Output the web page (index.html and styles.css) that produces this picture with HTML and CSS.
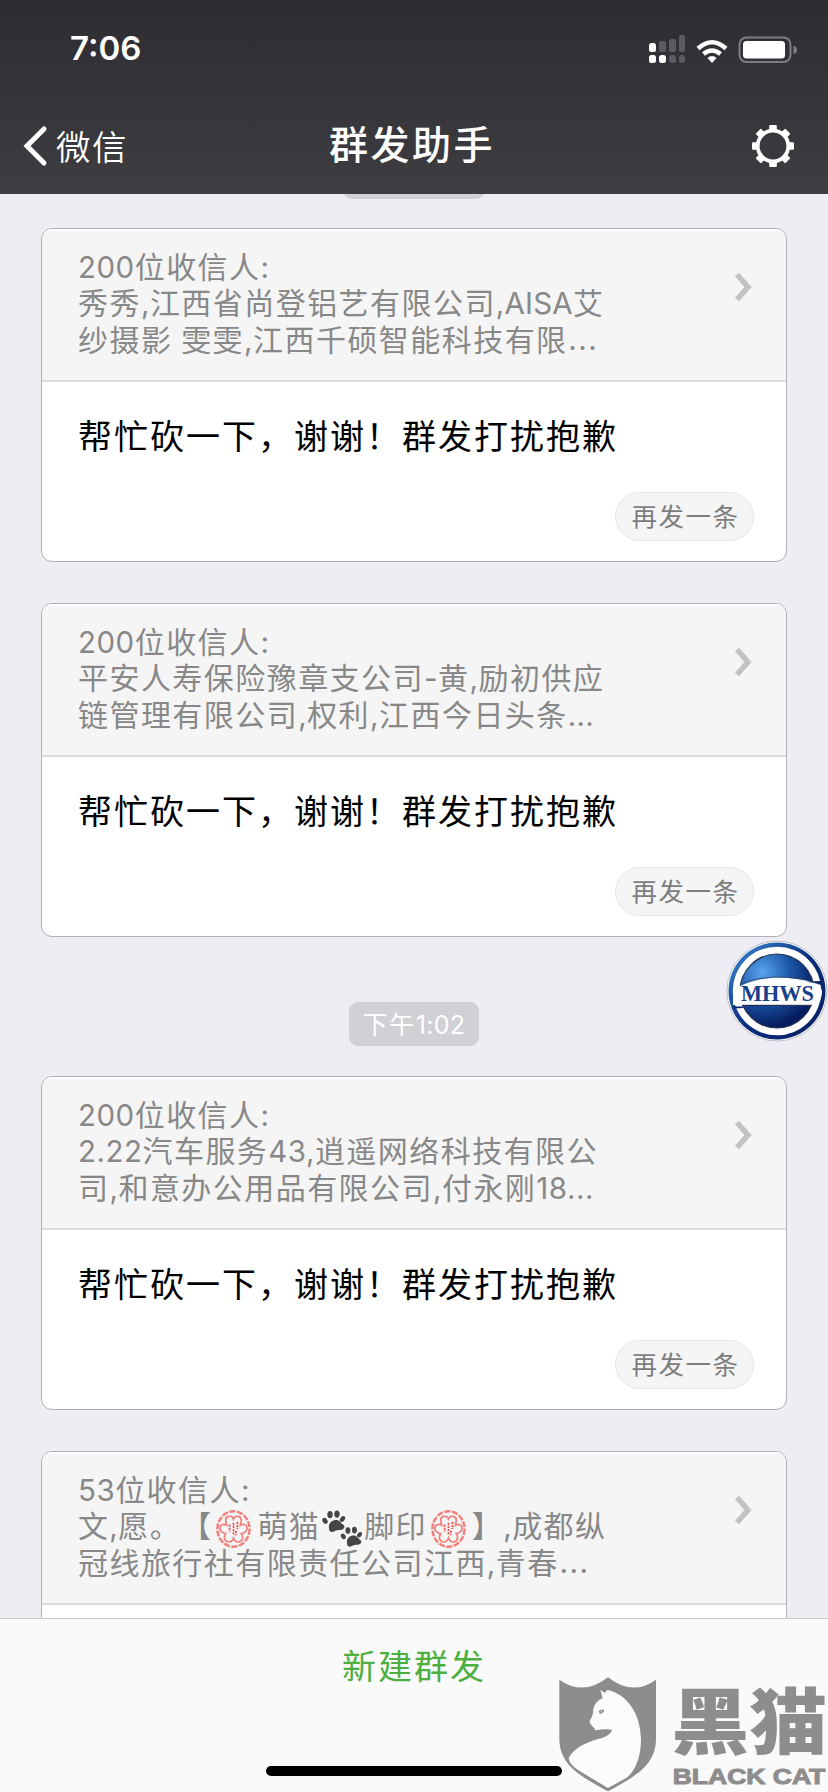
FILE: index.html
```html
<!DOCTYPE html>
<html lang="zh-CN">
<head>
<meta charset="utf-8">
<title>群发助手</title>
<link rel="stylesheet" href="styles.css">
</head>
<body>
<svg width="0" height="0" class="defs">
  <symbol id="chevron" viewBox="0 0 18 30"><path d="M3 2.500L14 15L3 27.500" fill="none" stroke="#c2c2c2" stroke-width="5.500"/></symbol>
  <symbol id="flower" viewBox="0 0 38 44" preserveAspectRatio="none">
    <g fill="none" stroke="#f0817c">
      <ellipse cx="19" cy="22" rx="16.500" ry="19.500" stroke-width="2.600" stroke-dasharray="6.500 1.500"/>
      <path d="M19 11c2-5 8-3 8 1c0 3-1 4-1 6c3-2 7-1 7 3s-4 6-6 6c2 3 2 8-2 9c-3 1-5-1-6-4c-1 3-3 5-6 4c-4-1-4-6-2-9c-2 0-6-2-6-6s4-5 7-3c0-2-1-3-1-6c0-4 6-6 8-1z" stroke-width="1.800"/>
    </g>
    <path d="M23 14v8M19 15v13M15 17v8M21.500 24v5" stroke="#ef5350" stroke-width="1.800" stroke-dasharray="2.500 1"/>
  </symbol>
  <symbol id="paws" viewBox="0 0 40 42" preserveAspectRatio="none">
    <g fill="#454545">
      <g id="paw"><path d="M7 20c-1-5 3-9 7-9s4 3 7 5s1 6-3 6s-4 1-7 2s-4-1-4-4z"/><ellipse cx="3" cy="12" rx="2.500" ry="3.500" transform="rotate(-25 3 12)"/><ellipse cx="8" cy="5" rx="2.700" ry="4"/><ellipse cx="15" cy="4.500" rx="2.700" ry="4"/><ellipse cx="20.500" cy="10" rx="2.300" ry="3.500" transform="rotate(30 20.500 10)"/></g>
      <use href="#paw" transform="translate(18.500 18) scale(.93)"/>
    </g>
  </symbol>
</svg>
<div class="screen">
  <header class="top">
    <div class="status">
      <div class="time">7:06</div>
      <svg class="indicators" width="150" height="32" viewBox="0 0 150 32">
        <g fill="#fff"><rect x="1" y="9" width="7" height="9" rx="2.500"/><rect x="1" y="21" width="7" height="8" rx="2.500"/><rect x="11" y="21" width="7" height="8" rx="2.500"/></g>
        <g fill="#5c5b60"><rect x="11" y="7" width="7" height="11" rx="2"/><rect x="21" y="5" width="7" height="13" rx="2"/><rect x="31" y="1" width="6" height="17" rx="2"/><rect x="21" y="21" width="7" height="8" rx="2.500"/><rect x="31" y="21" width="6" height="8" rx="2.500"/></g>
        <g fill="none" stroke="#fff" stroke-width="4.400"><path d="M50 14.500Q64 2 78 14.500"/><path d="M55.500 20Q64 13 72.500 20"/></g>
        <path d="M59.500 24Q64 20 68.500 24L64 29z" fill="#fff"/>
        <rect x="91.500" y="3.500" width="51" height="24.500" rx="7" fill="none" stroke="#7d7c80" stroke-width="2"/>
        <rect x="95" y="7" width="42" height="17.500" rx="3.500" fill="#fff"/>
        <path d="M145.500 11.500Q149 12.500 149 16T145.500 20z" fill="#7d7c80"/>
      </svg>
    </div>
    <nav class="nav">
      <div class="back">
        <svg width="26" height="42" viewBox="0 0 26 42"><path d="M21 4L4 21L21 38" fill="none" stroke="#fff" stroke-width="5" stroke-linecap="round"/></svg>
        <span>微信</span>
      </div>
      <h1>群发助手</h1>
      <svg class="gear" width="44" height="44" viewBox="-22 -22 44 44">
        <circle r="15.300" fill="none" stroke="#fff" stroke-width="3.800"/>
        <g fill="#fff"><g id="teeth"><rect x="-3.800" y="-21" width="7.600" height="6" rx="1"/><rect x="-3.800" y="15" width="7.600" height="6" rx="1"/><rect x="-21" y="-3.800" width="6" height="7.600" rx="1"/><rect x="15" y="-3.800" width="6" height="7.600" rx="1"/></g><use href="#teeth" transform="rotate(45)"/></g>
      </svg>
    </nav>
  </header>
  <main class="feed">
    <div class="pill cut"></div>
    <section class="card">
      <div class="recipients">
        <p><span class="lat">200</span>位收信人<span class="lat">:</span></p>
        <p>秀秀<span class="lat">,</span>江西省尚登铝艺有限公司<span class="lat tight">,AISA</span>艾</p>
        <p>纱摄影<span class="lat sp"> </span>雯雯<span class="lat">,</span>江西千硕智能科技有限<span class="dots">…</span></p>
        <svg class="arrow"><use href="#chevron"/></svg>
      </div>
      <p class="message">帮忙砍一下，谢谢！群发打扰抱歉</p>
      <button class="again">再发一条</button>
    </section>
    <section class="card">
      <div class="recipients">
        <p><span class="lat">200</span>位收信人<span class="lat">:</span></p>
        <p>平安人寿保险豫章支公司<span class="lat">-</span>黄<span class="lat">,</span>励初供应</p>
        <p>链管理有限公司<span class="lat">,</span>权利<span class="lat">,</span>江西今日头条<span class="lat tight">...</span></p>
        <svg class="arrow"><use href="#chevron"/></svg>
      </div>
      <p class="message">帮忙砍一下，谢谢！群发打扰抱歉</p>
      <button class="again">再发一条</button>
    </section>
    <div class="pill">下午<span>1:02</span></div>
    <section class="card">
      <div class="recipients">
        <p><span class="lat">200</span>位收信人<span class="lat">:</span></p>
        <p><span class="lat">2.22</span>汽车服务<span class="lat">43,</span>逍遥网络科技有限公</p>
        <p>司<span class="lat">,</span>和意办公用品有限公司<span class="lat">,</span>付永刚<span class="lat">18...</span></p>
        <svg class="arrow"><use href="#chevron"/></svg>
      </div>
      <p class="message">帮忙砍一下，谢谢！群发打扰抱歉</p>
      <button class="again">再发一条</button>
    </section>
    <section class="card">
      <div class="recipients">
        <p><span class="lat">53</span>位收信人<span class="lat">:</span></p>
        <p class="full">文<span class="lat">,</span>愿。【<svg class="emoji"><use href="#flower"/></svg>萌猫<svg class="emoji paws"><use href="#paws"/></svg>脚印<svg class="emoji"><use href="#flower"/></svg>】<span class="lat">,</span>成都纵</p>
        <p>冠线旅行社有限责任公司江西<span class="lat">,</span>青春<span class="dots">…</span></p>
        <svg class="arrow"><use href="#chevron"/></svg>
      </div>
      <p class="message"></p>
    </section>
  </main>
  <footer class="bottom">
    <a class="create">新建群发</a>
    <div class="home"></div>
  </footer>
  <svg class="badge" viewBox="0 0 102 102">
    <defs>
      <radialGradient id="blue" cx=".3" cy=".25" r=".75"><stop offset="0" stop-color="#5aa5ee"/><stop offset=".5" stop-color="#1c57a8"/><stop offset="1" stop-color="#061c5e"/></radialGradient>
      <linearGradient id="rim" x1="0" y1="0" x2="1" y2="1"><stop offset="0" stop-color="#3f8edb"/><stop offset=".5" stop-color="#0b2f7d"/><stop offset="1" stop-color="#08205e"/></linearGradient>
    </defs>
    <circle cx="51" cy="51" r="50" fill="#fff" stroke="#a9adb8" stroke-width=".8"/>
    <circle cx="51" cy="51" r="48.500" fill="url(#rim)"/>
    <circle cx="51" cy="51" r="44.300" fill="#fff"/>
    <circle cx="51" cy="51" r="37" fill="url(#blue)" stroke="#273452" stroke-width="1.200"/>
    <path d="M7 50Q25 39 50 37.500Q75 38 90 43Q96 46 96 53Q95 62 90 65.500Q50 65 7 65z" fill="#fff"/>
    <path d="M80 41.500L95 41L97 46L91 43.500z" fill="#0a276d"/>
    <path d="M7 66.500L17 66.500L17.500 68L8 68.500z" fill="#0a276d"/>
    <path d="M16 65.300H86" stroke="#1f2b4b" stroke-width="1"/>
    <path d="M14 44Q35 36 58 37Q78 38 93 44" fill="none" stroke="#30466f" stroke-width=".8"/>
    <text x="15" y="61" textLength="73" lengthAdjust="spacingAndGlyphs" font-family="Liberation Serif, serif" font-size="24" font-weight="700" fill="#17408b">MHWS</text>
  </svg>
  <svg class="watermark" viewBox="0 0 864 396">
    <path d="M58 59Q130 110 204 52Q278 110 348 59V235C348 315 290 347 204 394C118 347 58 315 58 235z" fill="#8e8c8d"/>
    <path d="M181 90L195 99L201 90C260 101 303 160 303 242C302 290 288 328 262 352L204 384L120 334C98 320 88 308 86 294C101 264 139 248 172 238C199 231 213 222 216 209Q193 206 166 211C164 202 149 195 149 184C151 177 158 169 159 158C160 135 171 121 188 115z" fill="#fbfbfb"/>
    <path d="M176 154Q182 146 192 149Q194 158 180 162zM184 150Q181 156 187 159" fill="#8e8c8d" fill-rule="evenodd"/>
    <g fill="#8e8c8d">
      <text x="394" y="263" textLength="468" lengthAdjust="spacingAndGlyphs" font-family="Noto Sans CJK SC, sans-serif" font-size="216" font-weight="900">黑猫</text>
      <text x="398" y="372" textLength="458" lengthAdjust="spacingAndGlyphs" font-family="Liberation Sans, sans-serif" font-size="68" font-weight="700" stroke="#8e8c8d" stroke-width="3">BLACK CAT</text>
    </g>
  </svg>
</div>
</body>
</html>
```
FILE: styles.css
```css
* { box-sizing: border-box; }
body, h1, p { margin: 0; }
body { background: #eeedf3; font-family: "Inter", "Noto Sans CJK SC", sans-serif; }
.defs { position: absolute; }
.screen { position: relative; width: 828px; height: 1792px; display: flex; flex-direction: column; overflow: hidden; background: #eeedf3; }

.top { height: 194px; flex: none; background: linear-gradient(#2d2c30, #3e3d41); color: #fff; }
.status { height: 98px; padding: 34px 30px 0 70px; display: flex; justify-content: space-between; align-items: flex-start; }
.time { font-size: 33px; line-height: 29px; font-weight: 600; letter-spacing: 0; }
.nav { height: 96px; padding: 0 33px 0 23px; display: grid; grid-template-columns: 1fr auto 1fr; align-items: center; }
.back { display: flex; align-items: center; gap: 7px; font: 350 34.500px/50px "Noto Sans CJK SC", sans-serif; letter-spacing: 1.500px; }
.back span { margin-top: -3px; }
.nav h1 { font: 500 39px/50px "Noto Sans CJK SC", sans-serif; letter-spacing: 2.500px; margin: -8px 0 0 6px; }
.gear { justify-self: end; }

.feed { flex: 1; min-height: 0; overflow: hidden; padding: 0 41px; display: flex; flex-direction: column; }
.pill { align-self: center; flex: none; width: 130px; height: 44px; margin: 24px 0 30px; border-radius: 9px; background: #d1d0d5; color: #fff; font: 400 25px/42px "Noto Sans CJK SC", sans-serif; letter-spacing: 1.500px; text-align: center; }
.pill span { font-family: "Inter", sans-serif; letter-spacing: .3px; font-weight: 400; }
.pill.cut { width: 142px; margin: -39px 0 29px; }

.card { flex: none; height: 334px; margin-bottom: 41px; border: 1px solid #b0b0b4; border-radius: 11px; background: #fff; overflow: hidden; display: flex; flex-direction: column; }
.recipients { position: relative; height: 153px; padding: 17.500px 0 0 36px; border-bottom: 2px solid #dcdcdc; background: #f5f5f5; box-shadow: inset 0 2px #fff; color: #888; }
.recipients p { height: 36.600px; font: 400 30px/36.600px "Noto Sans CJK SC", sans-serif; letter-spacing: 1.450px; white-space: nowrap; }
.recipients .full { letter-spacing: 1.350px; text-spacing-trim: space-all; font-feature-settings: "chws" 0, "halt" 0; }
.lat { font-family: "Inter", sans-serif; font-size: 29.500px; letter-spacing: .5px; }
.tight { letter-spacing: .2px; }
.sp { white-space: pre; }
.dots { position: relative; top: 8px; letter-spacing: 3px; }
.arrow { position: absolute; left: 692px; top: 43px; width: 18px; height: 30px; }
.emoji { width: 37px; height: 40px; margin: -8px 5px -8px 3px; vertical-align: -4px; }
.paws { width: 40px; height: 38px; margin: -8px 2px; vertical-align: -3px; }
.message { padding: 27px 0 0 36px; font: 400 34px/52px "Noto Sans CJK SC", sans-serif; letter-spacing: 2px; color: #000; white-space: nowrap; }
.again { align-self: flex-end; width: 139px; height: 49px; margin: auto 32px 20px 0; padding: 0 0 3px 2px; border: 1px solid #e5e5e5; border-radius: 25px; background: #f5f5f5; color: #7d7d7d; font: 400 25.500px/42px "Noto Sans CJK SC", sans-serif; letter-spacing: 1.500px; }

.bottom { flex: none; height: 174px; border-top: 1px solid #c8c8cb; background: #fafafa; display: flex; flex-direction: column; align-items: center; justify-content: space-between; padding: 20px 0 16px; }
.create { font: 400 34px/52px "Noto Sans CJK SC", sans-serif; letter-spacing: 2px; color: #4caf3f; }
.home { width: 296px; height: 10px; border-radius: 5px; background: #000; }
.badge { position: absolute; left: 726px; top: 940px; width: 102px; height: 102px; }
.watermark { position: absolute; left: 540px; top: 1660px; width: 288px; height: 132px; }
```
